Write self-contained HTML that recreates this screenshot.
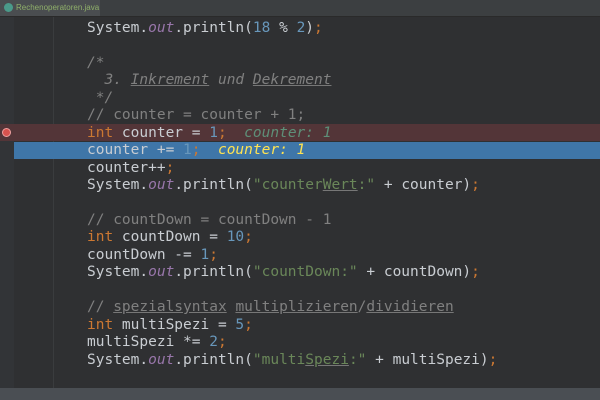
<!DOCTYPE html><html><head><style>
body{margin:0;width:600px;height:400px;overflow:hidden;background:#2f3032;position:relative;font-family:"Liberation Mono",monospace;}
.tab{position:absolute;top:0;left:0;width:600px;height:16px;background:#3c3f41;border-bottom:1px solid #2a2a2a}
.t1{position:absolute;left:0;top:0;width:100px;height:16px;background:#4a4d50;font:8px "Liberation Sans",sans-serif;color:#8fb06a;line-height:16px;padding-left:16px;box-sizing:border-box}
.gut{position:absolute;top:17px;left:0;width:14px;height:371px;background:#323437}
.gl{position:absolute;top:17px;left:53px;width:1px;height:371px;background:#3a3c3e}
.bot{position:absolute;top:388px;left:0;width:600px;height:12px;background:#4a4e53}
.red{position:absolute;left:0;top:124px;width:600px;height:17px;background:#533538}
.blue{position:absolute;left:14px;top:142px;width:586px;height:17px;background:#3f76a8}
pre{position:absolute;left:87px;top:20px;margin:0;font-size:14.5px;line-height:17.45px;color:#c9cdd2}
.k{color:#cc7832}.n{color:#6897bb}.o{color:#9876aa;font-style:italic}.c{color:#808080}.ci{color:#808080;font-style:italic}.s{color:#6a8759}.y{color:#ffe352;font-style:italic}.g{color:#5e8f78;font-style:italic}.u{text-decoration:underline;text-decoration-color:#777}
</style></head><body>
<div class="tab"><div class="t1">Rechenoperatoren.java</div></div>
<div style="position:absolute;left:4px;top:3px;width:9px;height:9px;border-radius:50%;background:#4a9a8a"></div>
<div class="gut"></div><div class="gl"></div>
<div class="red"></div><div class="blue"></div>
<div style="position:absolute;left:2px;top:128px;width:7px;height:7px;border-radius:50%;background:#d9534f;border:1px solid #f0a0a0"></div>
<div class="bot"></div>
<pre>System.<span class="o">out</span>.println(<span class="n">18</span> % <span class="n">2</span>)<span class="k">;</span>

<span class="ci">/*
  3. <span class="u">Inkrement</span> und <span class="u">Dekrement</span>
 */</span>
<span class="c">// counter = counter + 1;</span>
<span class="k">int</span> counter = <span class="n">1</span><span class="k">;</span>  <span class="g">counter: 1</span>
counter += <span class="n">1</span><span class="k">;</span>  <span class="y">counter: 1</span>
counter++<span class="k">;</span>
System.<span class="o">out</span>.println(<span class="s">"counter<span class="u">Wert</span>:"</span> + counter)<span class="k">;</span>

<span class="c">// countDown = countDown - 1</span>
<span class="k">int</span> countDown = <span class="n">10</span><span class="k">;</span>
countDown -= <span class="n">1</span><span class="k">;</span>
System.<span class="o">out</span>.println(<span class="s">"countDown:"</span> + countDown)<span class="k">;</span>

<span class="c">// <span class="u">spezialsyntax</span> <span class="u">multiplizieren</span>/<span class="u">dividieren</span></span>
<span class="k">int</span> multiSpezi = <span class="n">5</span><span class="k">;</span>
multiSpezi *= <span class="n">2</span><span class="k">;</span>
System.<span class="o">out</span>.println(<span class="s">"multi<span class="u">Spezi</span>:"</span> + multiSpezi)<span class="k">;</span></pre>
</body></html>
